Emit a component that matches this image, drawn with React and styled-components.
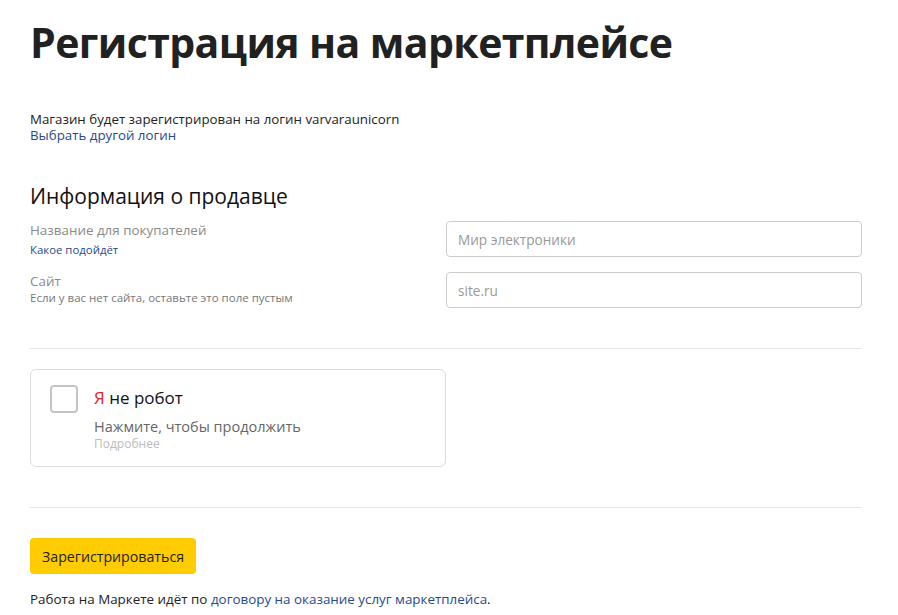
import React from 'react';
import styled, { createGlobalStyle } from 'styled-components';

const GlobalStyle = createGlobalStyle`
    body {
        margin: 0;
        background: #fff;
        font-family: "Open Sans", "Liberation Sans", sans-serif;
        color: #222;
    }
`;

const Page = styled.main`
    width: 832px;
    padding: 14px 0 0 30px;
`;

const Title = styled.h1`
    margin: 0;
    font-size: 41px;
    line-height: 56px;
    font-weight: 700;
    color: #212121;
    letter-spacing: -0.6px;
`;

const Intro = styled.section`
    margin-top: 41px;
    font-size: 13.3px;
    line-height: 16px;
`;

const Link = styled.a`
    color: #1f4a8d;
    text-decoration: none;
    cursor: pointer;
`;

const SectionTitle = styled.h2`
    margin: 39px 0 0;
    font-size: 21px;
    line-height: 28px;
    font-weight: 400;
    color: #111;
`;

const Fields = styled.div`
    margin-top: 11px;
    display: grid;
    grid-template-columns: 416px 416px;
    row-gap: 15px;
`;

const LabelCell = styled.div`
    display: flex;
    flex-direction: column;
    height: 36px;
`;

const Label = styled.span`
    font-size: 13.4px;
    line-height: 18px;
    color: #8a8a8a;
`;

const Hint = styled.span`
    font-size: ${p => p.$muted ? 11.5 : 11.4}px;
    line-height: 15px;
    color: ${p => p.$muted ? '#777' : '#1f4a8d'};
    margin-top: ${p => p.$gap || 0}px;
`;

const Input = styled.input`
    box-sizing: border-box;
    width: 416px;
    height: 36px;
    padding: 0 11px;
    border: 1px solid #ccc;
    border-radius: 4px;
    font-family: inherit;
    font-size: 13.6px;
    color: #222;
    outline: none;
    &::placeholder {
        color: #999;
    }
`;

const Divider = styled.hr`
    margin: ${p => p.$top}px 0 0;
    border: 0;
    border-top: 1px solid #e8e8e8;
`;

const Captcha = styled.div`
    box-sizing: border-box;
    margin-top: 20px;
    width: 416px;
    height: 98px;
    border: 1px solid #ddd;
    border-radius: 6px;
    padding: 15px 19px;
    display: flex;
    gap: 16px;
`;

const CheckBox = styled.span`
    box-sizing: border-box;
    flex: none;
    width: 28px;
    height: 28px;
    border: 2px solid #c4c4c4;
    border-radius: 4px;
`;

const CaptchaText = styled.div`
    display: flex;
    flex-direction: column;
`;

const CaptchaTitle = styled.span`
    font-size: 17px;
    line-height: 26px;
    color: #111;
`;

const Ya = styled.span`
    color: #e0252b;
`;

const CaptchaSub = styled.span`
    margin-top: 7px;
    font-size: 14.5px;
    line-height: 18px;
    color: #666;
`;

const CaptchaMore = styled.span`
    font-size: 12px;
    line-height: 16px;
    color: #bbb;
`;

const Submit = styled.button`
    margin-top: 30px;
    height: 36px;
    padding: 0 12px;
    border: 0;
    border-radius: 4px;
    background: #ffcc00;
    font-family: inherit;
    font-size: 14.2px;
    color: #222;
    cursor: pointer;
`;

const Footer = styled.p`
    margin: 16px 0 0;
    font-size: 13.4px;
    line-height: 18px;
    color: #222;
`;

export default function App() {
    return (
        <Page>
            <GlobalStyle />
            <Title>Регистрация на маркетплейсе</Title>

            <Intro>
                <div>Магазин будет зарегистрирован на логин varvaraunicorn</div>
                <Link>Выбрать другой логин</Link>
            </Intro>

            <SectionTitle>Информация о продавце</SectionTitle>
            <Fields>
                <LabelCell>
                    <Label>Название для покупателей</Label>
                    <Hint $gap={3}>Какое подойдёт</Hint>
                </LabelCell>
                <Input placeholder="Мир электроники" />
                <LabelCell>
                    <Label>Сайт</Label>
                    <Hint $muted>Если у вас нет сайта, оставьте это поле пустым</Hint>
                </LabelCell>
                <Input placeholder="site.ru" />
            </Fields>

            <Divider $top={40} />

            <Captcha>
                <CheckBox />
                <CaptchaText>
                    <CaptchaTitle><Ya>Я</Ya> не робот</CaptchaTitle>
                    <CaptchaSub>Нажмите, чтобы продолжить</CaptchaSub>
                    <CaptchaMore>Подробнее</CaptchaMore>
                </CaptchaText>
            </Captcha>

            <Divider $top={40} />

            <Submit>Зарегистрироваться</Submit>

            <Footer>
                Работа на Маркете идёт по <Link>договору на оказание услуг маркетплейса</Link>.
            </Footer>
        </Page>
    );
}
